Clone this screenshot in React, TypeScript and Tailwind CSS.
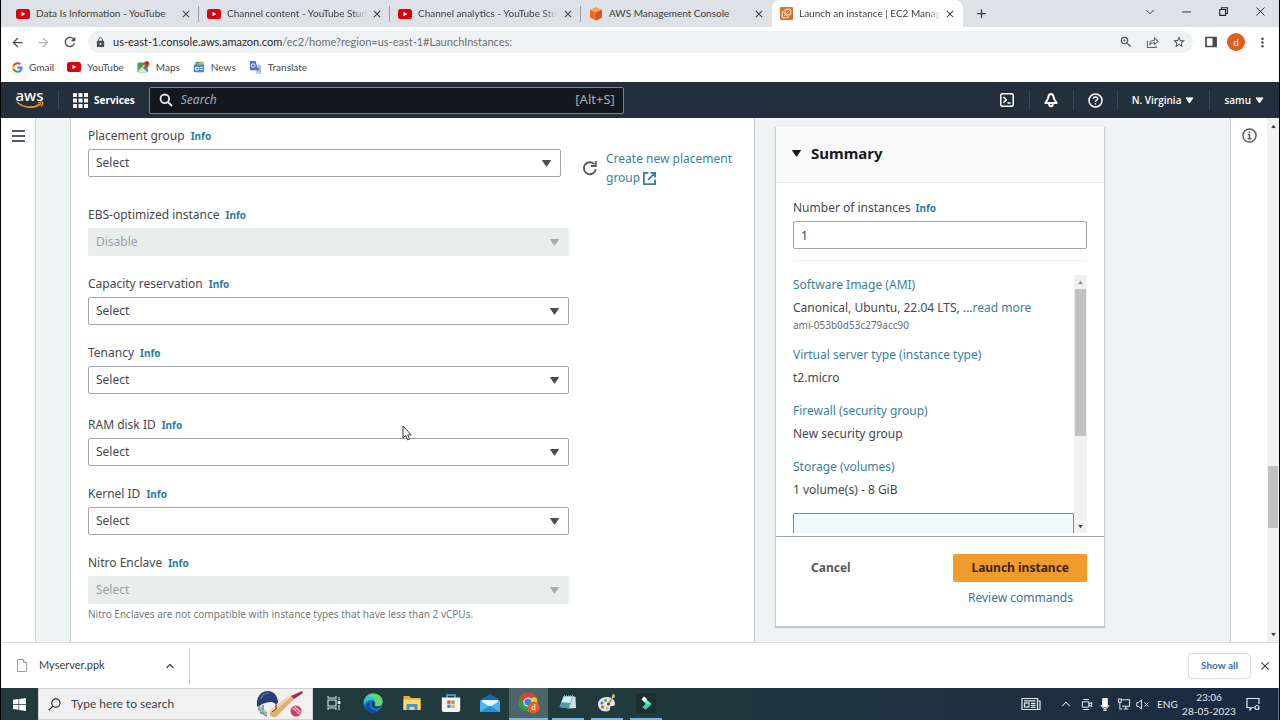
import React, { useState } from 'react';
import { clsx } from 'clsx';
import {
  MdArrowBack,
  MdArrowForward,
  MdRefresh,
  MdLock,
  MdMoreVert,
  MdStarBorder,
  MdZoomIn,
  MdClose,
  MdAdd,
} from 'react-icons/md';
import { ChevronDown, ChevronUp } from 'lucide-react';

const UI_FONT = "font-['Lato','Open_Sans',sans-serif]";
const AWS_FONT = "font-['Noto_Sans','Open_Sans',sans-serif]";

/* ---------- small icons ---------- */

const YouTubeIcon = () => (
  <svg viewBox="0 0 14 10" className="h-[10px] w-[14px] shrink-0">
    <rect width="14" height="10" rx="2.5" fill="#d8040c" />
    <path d="M5.5 2.8 9.3 5 5.5 7.2z" fill="#fff" />
  </svg>
);

const CubeIcon = () => (
  <svg viewBox="0 0 14 14" className="size-[14px] shrink-0">
    <path d="M7 .6 13 3v7.6L7 13.6 1 10.6V3z" fill="#ee6b1c" />
    <path d="M7 .6 13 3 7 5.4 1 3z" fill="#f9a25b" />
    <path d="M7 5.4 13 3v7.6l-6 3z" fill="#d9541e" />
  </svg>
);

const Ec2Icon = () => (
  <svg viewBox="0 0 14 14" className="size-[13px] shrink-0">
    <rect width="14" height="14" rx="1" fill="#d9732b" />
    <g fill="none" stroke="#fff" strokeWidth="1">
      <rect x="5.5" y="2.5" width="6" height="6" rx="1" />
      <path d="M4 5H3a.5.5 0 0 0-.5.5V11a.5.5 0 0 0 .5.5h5.500a.5.5 0 0 0 .5-.5v-1M7 7l3-3M4.500 9.500l2-2" />
    </g>
  </svg>
);

const GoogleIcon = () => (
  <svg viewBox="0 0 24 24" className="size-[11px]">
    <path fill="#4285F4" d="M23 12.300c0-.8-.1-1.600-.2-2.300H12v4.500h6.200a5.300 5.300 0 0 1-2.300 3.400v2.900h3.700c2.200-2 3.400-5 3.400-8.500z" />
    <path fill="#34A853" d="M12 23.500c3.100 0 5.700-1 7.600-2.800l-3.700-2.900c-1 .7-2.300 1.100-3.900 1.100-3 0-5.500-2-6.400-4.700H1.800v3A11.500 11.500 0 0 0 12 23.500z" />
    <path fill="#FBBC05" d="M5.600 14.200a6.900 6.900 0 0 1 0-4.400v-3H1.800a11.500 11.500 0 0 0 0 10.400z" />
    <path fill="#EA4335" d="M12 5.100c1.700 0 3.200.6 4.400 1.700l3.300-3.300A11.500 11.500 0 0 0 1.800 6.800l3.800 3C6.500 7.100 9 5.100 12 5.100z" />
  </svg>
);

const MapsIcon = () => (
  <svg viewBox="0 0 14 14" className="size-[13px]">
    <rect x=".5" y="1.500" width="11" height="11" rx="1.500" fill="#34a25b" />
    <path d="M1 12.500 6.500 7l5 5.500z" fill="#dfe6ea" />
    <path d="M1 11.500 10 2.500" stroke="#f6d15b" strokeWidth="1.500" />
    <path d="M7 7.500 11.500 12V9L8.500 6z" fill="#4a86e8" />
    <path d="M10.500 0A2.800 2.800 0 0 0 7.700 2.800c0 2 2.800 5 2.800 5s2.800-3 2.800-5A2.800 2.800 0 0 0 10.500 0z" fill="#d93a2f" />
    <circle cx="10.500" cy="2.800" r="1" fill="#7d1710" />
  </svg>
);

const NewsIcon = () => (
  <svg viewBox="0 0 14 14" className="size-[12px]">
    <path d="M3 1h8v5H3z" fill="#3fa35c" />
    <path d="M5 2.500 12.500 1l1 5H5z" fill="#e8b52e" />
    <rect x="1" y="4" width="12" height="9" rx="1" fill="#4a86d8" />
    <path d="M3 7.500h3.500v3H3zM8 7.500h3.500M8 10h3.500" stroke="#fff" fill="none" />
  </svg>
);

const TranslateIcon = () => (
  <svg viewBox="0 0 14 14" className="size-[13px]">
    <path d="M6 4h7v10H8z" fill="#c5cbd3" />
    <path d="M9 8h3.500M10.800 7v1c-.2 1.500-1 2.500-2 3.200M9.800 9c.5 1 1.300 1.800 2.500 2.200" stroke="#6a7f9e" strokeWidth=".8" fill="none" />
    <path d="M1 0h6l3 10H1z" fill="#3f79d9" />
    <circle cx="4.500" cy="4.800" r="1.900" stroke="#fff" fill="none" />
  </svg>
);

const ShareIcon = () => (
  <svg viewBox="0 0 14 14" className="size-[13px]" fill="none" stroke="#5f6368" strokeWidth="1.100">
    <path d="M1.500 5v7.500h9.500V10.500" />
    <path d="M3.800 9.500C4 6.500 6 4.500 9 4.500V2l4 3.700L9 9.300V7C7 7 5.200 7.700 3.800 9.500z" strokeLinejoin="round" />
  </svg>
);

const Caret = ({ className }: { className?: string }) => (
  <svg viewBox="0 0 9 7" className={clsx('h-[7px] w-[9px] shrink-0', className)}>
    <path d="M.5.500h8L4.500 6.300z" fill="currentColor" stroke="currentColor" strokeLinejoin="round" />
  </svg>
);

/* ---------- browser chrome ---------- */

const TABS = [
  { title: 'Data Is Information - YouTube', icon: <YouTubeIcon /> },
  { title: 'Channel content - YouTube Stud', icon: <YouTubeIcon />, fade: true },
  { title: 'Channel analytics - YouTube Stu', icon: <YouTubeIcon />, fade: true },
  { title: 'AWS Management Console', icon: <CubeIcon /> },
  { title: 'Launch an instance | EC2 Manag', icon: <Ec2Icon />, active: true, fade: true },
];

const TabStrip = () => (
  <div className="flex h-[27px] items-stretch bg-[#dee1e5] pl-[7px] text-[#3c4043]">
    {TABS.map((tab, i) => (
      <div
        key={tab.title}
        className={clsx(
          'flex w-[191px] min-w-0 items-center gap-[6px] px-2',
          tab.active && 'rounded-t-lg bg-white',
        )}
      >
        {tab.icon}
        <div className="min-w-0 flex-1 whitespace-nowrap text-[10px]">
          <span className={clsx(tab.fade && 'mask-r-from-90%')}>{tab.title}</span>
        </div>
        <button aria-label="Close tab" className="shrink-0">
          <MdClose size={12} />
        </button>
        <span className={clsx('-mr-2 h-4 w-px', i < 3 && 'bg-[#9a9da1]')} />
      </div>
    ))}
    <button aria-label="New tab" className="flex w-9 items-center justify-center">
      <MdAdd size={15} />
    </button>
    <div className="ml-auto flex text-[#222]">
      <button aria-label="Search tabs" className="flex w-[37px] items-center justify-center pb-1">
        <ChevronDown size={14} strokeWidth={1.500} />
      </button>
      <button aria-label="Minimize" className="flex w-[37px] items-center justify-center pb-1">
        <svg viewBox="0 0 10 10" className="size-[9px]" stroke="#222"><path d="M0 5.500h10" /></svg>
      </button>
      <button aria-label="Restore" className="flex w-[37px] items-center justify-center pb-1">
        <svg viewBox="0 0 10 10" className="size-[9px]" fill="none" stroke="#222" strokeWidth="1.200">
          <path d="M.8 2.800h6.500v6.500H.8zM2.800 2.800V.8h6.500v6.500H7.500" />
        </svg>
      </button>
      <button aria-label="Close window" className="flex w-[37px] items-center justify-center pb-1">
        <svg viewBox="0 0 10 10" className="size-[9px]" stroke="#222"><path d="M.5.5l9 9M9.500.5l-9 9" /></svg>
      </button>
    </div>
  </div>
);

const Toolbar = () => (
  <div className="flex h-[30px] items-center px-[9px] text-[#4a4d51]">
    <button aria-label="Back" className="flex w-[26px]"><MdArrowBack size={15} /></button>
    <button aria-label="Forward" className="flex w-[26px] text-[#b4b6b9]"><MdArrowForward size={15} /></button>
    <button aria-label="Reload" className="flex w-[26px]"><MdRefresh size={16} /></button>
    <div className="flex h-[22px] min-w-0 flex-1 items-center gap-[7px] rounded-full bg-[#eff2f3] px-[7px]">
      <MdLock size={11} className="shrink-0" />
      <div className="min-w-0 flex-1 truncate text-[11px] text-[#6b6f73]">
        <span className="text-[#26282b]">us-east-1.console.aws.amazon.com</span>
        /ec2/home?region=us-east-1#LaunchInstances:
      </div>
      <div className="flex items-center gap-[13px]">
        <button aria-label="Zoom"><MdZoomIn size={14} /></button>
        <button aria-label="Share"><ShareIcon /></button>
        <button aria-label="Bookmark"><MdStarBorder size={14} /></button>
      </div>
    </div>
    <div className="ml-3 flex items-center gap-[10px]">
      <button aria-label="Side panel">
        <svg viewBox="0 0 12 12" className="size-[12px]">
          <path d="M1 1.500h10v9H1z" fill="none" stroke="#45484c" strokeWidth="1.600" />
          <path d="M7.500 1h4v10h-4z" fill="#45484c" />
        </svg>
      </button>
      <span className="flex size-[18px] items-center justify-center rounded-full bg-[#dd5f1c] text-[10px] leading-none text-white">d</span>
      <button aria-label="Menu"><MdMoreVert size={15} /></button>
    </div>
  </div>
);

const BOOKMARKS = [
  { label: 'Gmail', icon: <GoogleIcon /> },
  { label: 'YouTube', icon: <YouTubeIcon /> },
  { label: 'Maps', icon: <MapsIcon /> },
  { label: 'News', icon: <NewsIcon /> },
  { label: 'Translate', icon: <TranslateIcon /> },
];

const BookmarksBar = () => (
  <div className="flex h-[25px] items-center gap-[13px] pb-[5px] pl-[11px] text-[10px] text-[#45484c]">
    {BOOKMARKS.map((b) => (
      <a key={b.label} href="#" className="flex items-center gap-[6px]">
        {b.icon}
        {b.label}
      </a>
    ))}
  </div>
);

/* ---------- AWS top navigation ---------- */

const NavDivider = () => <span className="h-5 w-px bg-[#3b4754]" />;

const AwsNav = () => (
  <header className={clsx('flex h-9 items-center bg-[#232f3b] text-white', AWS_FONT)}>
    <a href="#" aria-label="AWS home" className="flex w-[57px] flex-col items-center pb-px">
      <span className="text-[15px] leading-[11px] font-medium">aws</span>
      <svg viewBox="0 0 28 8" className="h-[8px] w-[28px]" fill="none" stroke="#ec912d" strokeWidth="1.700" strokeLinecap="round">
        <path d="M1.500 1.500C8 7.500 18 7.500 24.500 3" />
        <path d="M22.500 1.500c2-.6 3.500-.6 4 0s0 2-1 3.500" strokeWidth="1.300" />
      </svg>
    </a>
    <NavDivider />
    <button className="flex items-center gap-[6px] pl-[14px] text-[10px] font-bold">
      <svg viewBox="0 0 15 15" className="size-[15px]" fill="#fff">
        {[0, 5.5, 11].map((y) => [0, 5.5, 11].map((x) => <rect key={`${x}-${y}`} x={x} y={y} width="4" height="4" />))}
      </svg>
      Services
    </button>
    <label className="ml-[14px] flex h-[27px] w-full max-w-[475px] items-center gap-2 rounded-[2px] border border-[#76838f] bg-[#12181e] pl-[9px] pr-2 text-[12px]">
      <svg viewBox="0 0 14 14" className="size-[14px] shrink-0" fill="none" stroke="#e8eaec" strokeWidth="1.800">
        <circle cx="5.800" cy="5.800" r="4.300" />
        <path d="m9 9 4 4" />
      </svg>
      <input
        type="text"
        aria-label="Search"
        placeholder="Search"
        className="min-w-0 flex-1 bg-transparent italic outline-none placeholder:text-[#a4abb2]"
      />
      <span className="text-[13px] text-[#a4abb2]">[Alt+S]</span>
    </label>
    <div className="ml-auto flex items-center">
      <button aria-label="CloudShell" className="flex w-[43px] justify-center">
        <svg viewBox="0 0 14 14" className="size-[14px]" fill="none" stroke="#fff" strokeWidth="1.500">
          <rect x=".8" y=".8" width="12.400" height="12.400" rx="1.500" />
          <path d="M3.500 4 6.300 6.800 3.500 9.600M7.500 10h3" />
        </svg>
      </button>
      <NavDivider />
      <button aria-label="Notifications" className="flex w-[43px] justify-center">
        <svg viewBox="0 0 14 16" className="h-[16px] w-[14px]" fill="none" stroke="#fff" strokeWidth="1.900" strokeLinejoin="round">
          <path d="M7 2C5.200 2 4.500 3.500 4.300 5.500 4 7.500 3 8.800 1.300 11h11.400C11 8.800 10 7.500 9.700 5.500 9.500 3.500 8.800 2 7 2z" />
          <path d="M5.200 11v1.500a1.800 1.800 0 0 0 3.600 0V11" />
        </svg>
      </button>
      <NavDivider />
      <button aria-label="Support" className="flex w-[43px] justify-center">
        <svg viewBox="0 0 15 15" className="size-[15px]" fill="none" stroke="#fff" strokeWidth="1.500">
          <circle cx="7.500" cy="7.500" r="6.500" />
          <path d="M5.300 5.800c.1-1.200 1-1.900 2.200-1.900s2.200.7 2.200 1.800c0 1.500-2.200 1.500-2.200 3.200M7.500 10.200v1.400" />
        </svg>
      </button>
      <NavDivider />
      <button className="flex items-center gap-1 pl-[14px] pr-[15px] font-['Open_Sans',sans-serif] text-[10px] font-semibold whitespace-nowrap">
        N. Virginia
        <Caret className="scale-90" />
      </button>
      <NavDivider />
      <button className="flex items-center gap-1 pl-[14px] pr-[15px] font-['Open_Sans',sans-serif] text-[10px] font-semibold">
        samu
        <Caret className="scale-90" />
      </button>
    </div>
  </header>
);

/* ---------- form ---------- */

const InfoLink = () => (
  <a href="#" className="text-[10px] font-bold text-[#2a7ca3]">Info</a>
);

interface SelectFieldProps {
  id: string;
  label: string;
  value?: string;
  disabled?: boolean;
  hint?: string;
}

const SelectField = ({ id, label, value = 'Select', disabled, hint }: SelectFieldProps) => (
  <div className="w-full max-w-[481px]">
    <div className="mb-[3px] flex items-center gap-[6px] leading-5">
      <label htmlFor={id}>{label}</label>
      <InfoLink />
    </div>
    <div className="relative">
      <select
        id={id}
        disabled={disabled}
        className={clsx(
          'block h-7 w-full appearance-none rounded-[2px] border px-[7px] opacity-100',
          disabled ? 'border-[#e9edec] bg-[#e9edec] text-[#98a1a3]' : 'border-[#a0a5a9] bg-white text-[#45494d]',
        )}
      >
        <option>{value}</option>
      </select>
      <Caret
        className={clsx(
          'pointer-events-none absolute right-[10px] top-[11px]',
          disabled ? 'text-[#a5adaf]' : 'text-[#4b4f53]',
        )}
      />
    </div>
    {hint && <p className="mt-[2px] text-[10px] leading-4 text-[#73797d]">{hint}</p>}
  </div>
);

const AdvancedDetails = () => (
  <section className="flex min-w-0 flex-1 flex-col gap-[21px] overflow-hidden border-x border-[#c9cfd0] bg-white px-[17px] pt-2">
    <div className="flex flex-col gap-[18px]">
      <div className="flex items-start">
        <div className="min-w-0 flex-1 max-w-[473px]">
          <SelectField id="placement-group" label="Placement group" />
        </div>
        <div className="flex items-center pt-[23px]">
          <button aria-label="Refresh placement groups" className="ml-[21px] mr-2">
            <svg viewBox="0 0 16 16" className="size-4" fill="none" stroke="#545b60" strokeWidth="1.800">
              <path d="M13.800 9A6 6 0 1 1 12.300 4.200" />
              <path d="M13.800 1v5H9" />
            </svg>
          </button>
          <a href="#" className="w-[130px] leading-[19px] text-[#3a7f9f]">
            Create new placement group{' '}
            <svg viewBox="0 0 14 14" className="inline size-[13px]" fill="none" stroke="currentColor" strokeWidth="2">
              <path d="M6 1H1v12h12V8M8 1h5v5M13 1 5.500 8.500" />
            </svg>
          </a>
        </div>
      </div>
      <SelectField id="ebs-optimized" label="EBS-optimized instance" value="Disable" disabled />
      <SelectField id="capacity" label="Capacity reservation" />
      <SelectField id="tenancy" label="Tenancy" />
    </div>
    <div className="flex flex-col gap-[18px]">
      <SelectField id="ram-disk" label="RAM disk ID" />
      <SelectField id="kernel" label="Kernel ID" />
      <SelectField
        id="nitro"
        label="Nitro Enclave"
        disabled
        hint="Nitro Enclaves are not compatible with instance types that have less than 2 vCPUs."
      />
    </div>
  </section>
);

/* ---------- summary panel ---------- */

const SummaryItem = ({ title, children }: { title: string; children: React.ReactNode }) => (
  <div className="leading-5">
    <a href="#" className="text-[#3a7f9f]">{title}</a>
    <div className="mt-[3px]">{children}</div>
  </div>
);

const SummaryPanel = () => {
  const [count, setCount] = useState('1');

  return (
    <aside className="mt-[9px] w-[330px] shrink-0 self-start border border-t-0 border-[#c9cfd0] bg-white shadow-[0_1px_1px_#b8bfc0]">
      <h2 className="flex h-[56px] items-center gap-[10px] border-b border-[#eaeded] bg-[#fafafa] px-4 pb-[2px] text-[15px] font-bold text-[#16191f]">
        <Caret />
        Summary
      </h2>
      <div className="px-[17px] pt-[15px]">
        <div className="mb-[3px] flex items-center gap-[5px] leading-5">
          <label htmlFor="instances">Number of instances</label>
          <InfoLink />
        </div>
        <input
          id="instances"
          type="text"
          value={count}
          onChange={(e) => setCount(e.target.value)}
          className="block h-7 w-full rounded-[2px] border border-[#a0a5a9] px-[7px] outline-none"
        />
        <div className="mt-[11px] flex h-[273px] border-t border-[#eaeded] pt-[14px]">
          <div className="flex min-w-0 flex-1 flex-col gap-[13px] overflow-hidden">
            <SummaryItem title="Software Image (AMI)">
              Canonical, Ubuntu, 22.04 LTS, ...<a href="#" className="text-[#3a7f9f]">read more</a>
              <div className="text-[10px] leading-[14px] text-[#666c70]">ami-053b0d53c279acc90</div>
            </SummaryItem>
            <SummaryItem title="Virtual server type (instance type)">t2.micro</SummaryItem>
            <SummaryItem title="Firewall (security group)">New security group</SummaryItem>
            <SummaryItem title="Storage (volumes)">1 volume(s) - 8 GiB</SummaryItem>
            <div className="h-12 shrink-0 rounded-t-[2px] border border-b-0 border-[#5c93a8] bg-[#f0fafd]" />
          </div>
          <div className="flex w-[13px] flex-col items-center bg-[#f1f1f1]">
            <span className="flex h-[14px] items-center text-[#8b8b8b]">
              <Caret className="rotate-180 scale-50" />
            </span>
            <span className="h-[147px] w-[11px] bg-[#c1c1c1]" />
            <span className="mt-auto flex h-[14px] items-center text-[#404040]">
              <Caret className="scale-50" />
            </span>
          </div>
        </div>
      </div>
      <div className="mt-[3px] border-t border-[#a0a5a9] px-[17px] pb-[18px] pt-[17px]">
        <div className="flex items-center justify-between">
          <button className="h-7 pl-[18px] font-bold text-[#545b64]">Cancel</button>
          <button className="h-7 rounded-[2px] bg-[#f29a2b] px-[18px] font-bold text-[#3b2410]">Launch instance</button>
        </div>
        <div className="mt-[6px] pr-[14px] text-right leading-5">
          <a href="#" className="text-[#3f7396]">Review commands</a>
        </div>
      </div>
    </aside>
  );
};

/* ---------- download shelf ---------- */

const DownloadShelf = () => (
  <div className="flex h-[46px] items-center border-t border-[#d9dcde] bg-white text-[#3c4043]">
    <div className="my-1 flex h-[36px] w-[189px] items-center border-r border-[#cfd2d5] pl-4 pr-[13px]">
      <svg viewBox="0 0 10 13" className="h-[13px] w-[10px]" fill="#fdfdfd" stroke="#8e9296" strokeWidth=".9">
        <path d="M.5.500h6l3 3v9h-9z" />
        <path d="M6.500.5v3h3" />
      </svg>
      <span className="ml-[12px] flex-1 text-[11px]">Myserver.ppk</span>
      <button aria-label="More options"><ChevronUp size={12} strokeWidth={2.500} /></button>
    </div>
    <button className="ml-auto h-[26px] rounded-[4px] border border-[#dadce0] px-[12px] text-[10px] font-bold text-[#3871b0]">Show all</button>
    <button aria-label="Close downloads" className="ml-[7px] mr-[7px]"><MdClose size={14} /></button>
  </div>
);

/* ---------- Windows taskbar ---------- */

const CricketArt = () => (
  <svg viewBox="0 0 50 28" className="h-[28px] w-[50px]">
    <path d="M15 20 36 5l3 4-18 18c-3 1-6-1-6-3z" fill="#e6ae6a" />
    <path d="M15 20 36 5l1 1.500L17 23z" fill="#f5d3a0" />
    <path d="m36 6 11-5 1 2-9 6z" fill="#b3264c" />
    <path d="M2 16C1 7 6 1 13 1c6 0 10 5 10 12l-2 1-4-2c-4 0-9 1-11 3-2 1-4 2-4 1z" fill="#2b3c78" />
    <path d="M6 9c1-4 4-6 8-6" stroke="#5d73b8" strokeWidth="1.500" fill="none" />
    <path d="M21 12v7l-4 3M4 16c0 5 3 8 8 10M3 19h6M5 23h7M8 15v9" stroke="#27325a" strokeWidth="1" fill="none" />
    <path d="M3 17c1 4 4 8 9 8l1-2-6-7z" fill="#a7c59a" opacity=".7" />
    <circle cx="41" cy="21" r="5.500" fill="#d33a66" />
    <path d="m37.500 18 7 6M39.500 16.500l6 5.500" stroke="#f6c4d2" strokeWidth="1.200" />
  </svg>
);

const TaskViewIcon = () => (
  <svg viewBox="0 0 14 14" className="size-[14px]" fill="none" stroke="#e6ebec" strokeWidth="1.100">
    <path d="M1 4h8v6H1zM1 0v2h8V0M1 14v-2h8v2M12 1v3M12 9v5" />
    <rect x="11.300" y="5.500" width="1.500" height="2" fill="#fff" />
  </svg>
);

const EdgeIcon = () => (
  <svg viewBox="0 0 20 20" className="size-5">
    <circle cx="10" cy="10" r="9.500" fill="#1673c9" />
    <path d="M.8 8C2 3 6 .5 10 .5c6 0 9.500 4 9.500 8 0 3-2 5-5 5-2 0-3-.8-2.500-1.500 1-1.500.8-5-3.500-5C5 7 2 9 .8 12z" fill="#35c1d6" />
    <path d="M10 .5c6 0 9.500 4 9.500 8 0 3-2 5-5 5-2 0-3-.8-2.500-1.500.8-1 .8-2.500 0-3.500 0-3-3-6-8-5C5.500 1.500 7.500.5 10 .5z" fill="#5fd870" />
    <path d="M7 11c-.5 4 3 7.500 8 6.500-3 2.500-8 2.500-11 0C2 15 2 10 7.500 8.500 7.200 9.300 7 10 7 11z" fill="#0f4f9e" />
    <path d="M9 9.500c1-1.500 3-1 3 .8 0 .8-.5 1.200-.4 1.900.6 1.600 4 1.800 6.900.1-1 2-3 3.200-5 3.200C10 15.500 8 12 9 9.500z" fill="#223a3d" />
  </svg>
);

const FolderIcon = () => (
  <svg viewBox="0 0 18 16" className="h-[16px] w-[18px]">
    <path d="M.5 1h6l1.500 2h9.500v12H.5z" fill="#e6ac32" />
    <path d="M.5 4.500h17V15H.5z" fill="#fbd968" />
    <path d="M4.500 9h9c.8 0 1 .5 1 1v5h-3v-3h-5v3h-3v-5c0-.5.2-1 1-1z" fill="#4a93cf" />
  </svg>
);

const StoreIcon = () => (
  <svg viewBox="0 0 20 20" className="size-5">
    <path d="M6 5V2h8v3" fill="none" stroke="#4db1e8" strokeWidth="1.500" />
    <path d="M.8 4.500h18.400V17a2 2 0 0 1-2 2H2.800a2 2 0 0 1-2-2z" fill="#f3f6f7" />
    <path d="M6.300 7.500h3.300v3.300H6.300z" fill="#e5502a" />
    <path d="M10.400 7.500h3.300v3.300h-3.300z" fill="#76b02a" />
    <path d="M6.300 11.600h3.300v3.300H6.300z" fill="#2293d8" />
    <path d="M10.400 11.600h3.300v3.300h-3.300z" fill="#efb31f" />
  </svg>
);

const MailIcon = () => (
  <svg viewBox="0 0 20 18" className="h-[18px] w-5">
    <path d="M0 6 10 0l10 6v12H0z" fill="#1668b5" />
    <path d="M1.500 6h17v6h-17z" fill="#e9f3fa" />
    <path d="M0 6.500 10 13l10-6.500V18H0z" fill="#48b4ee" />
    <path d="M0 18 10 12l10 6z" fill="#1f93dc" />
  </svg>
);

const ChromeIcon = () => (
  <svg viewBox="0 0 22 22" className="size-[22px]">
    <circle cx="10" cy="10" r="9.500" fill="#2f9e4f" />
    <path d="M1.800 5.200C3.500 2.500 6.500.5 10 .5c3.500 0 6.600 2 8.200 4.900H10L6 12.500z" fill="#dc3f32" />
    <path d="M18.300 5.400c2 4 1 9-2.800 12.100-1.500 1.200-3.300 2-5.500 2l4-7 0-7z" fill="#f5c52f" />
    <circle cx="10" cy="10" r="4.600" fill="#fff" />
    <circle cx="10" cy="10" r="3.600" fill="#3b7de0" />
    <circle cx="15.500" cy="15.500" r="6" fill="#dd6420" />
    <text x="15.500" y="18.300" textAnchor="middle" fontSize="8" fill="#fff">d</text>
  </svg>
);

const NotepadIcon = () => (
  <svg viewBox="0 0 20 18" className="h-[18px] w-5">
    <path d="M5.500 2H15l-4 12.500L1.500 13z" fill="#8ecbd6" />
    <path d="M6 3h8l-2 6-8.500-1z" fill="#d3edf2" />
    <path d="M3.500 8.500 12 9l-1.500 5.500L1.500 13z" fill="#4f9bab" />
    <path d="m15 2 2.500 1 .5 11-7 .5z" fill="#cfe0e4" />
    <path d="M6 1.500h9" stroke="#8b989d" strokeDasharray="1 1" />
  </svg>
);

const PaintIcon = () => (
  <svg viewBox="0 0 20 20" className="size-5">
    <path d="M10 4c5 0 8 3 8 7 0 2-2 2-3.500 2S13 14.500 13 16s-2 2.500-4 2.500C4 18.500 1 15 1 11s4-7 9-7z" fill="#dfe6e9" />
    <circle cx="5" cy="10" r="1.600" fill="#4c86d8" />
    <circle cx="8.500" cy="7.200" r="1.500" fill="#57b05a" />
    <circle cx="5.500" cy="14" r="1.600" fill="#d8503e" />
    <circle cx="10" cy="15.500" r="1.400" fill="#e8b42f" />
    <circle cx="11.500" cy="11" r="1.500" fill="#35494d" />
    <path d="m12 10 4-6" stroke="#c98a42" strokeWidth="1.800" />
    <path d="M15 4.500c-.5-2 1-3 1.500-4 .8 1 2 2 1 4.500z" fill="#e3bd77" />
  </svg>
);

const FilmoraIcon = () => (
  <svg viewBox="0 0 20 20" className="size-5">
    <rect width="20" height="20" rx="2" fill="#1f2d30" />
    <path d="m9.500 5.500 6 5.500-6 5.500-3-2.500 3.500-3-2.500-2.500z" fill="#6fe8c8" />
    <path d="M10 11h5.500l-6 5.500-3-2.500z" fill="#3fcfab" />
    <path d="m8 3.500 3 2.500-2.500 3L5.500 6.500z" fill="#fff" />
  </svg>
);

const TASKBAR_APPS = [
  { name: 'Task View', icon: <TaskViewIcon /> },
  { name: 'Edge', icon: <EdgeIcon /> },
  { name: 'File Explorer', icon: <FolderIcon /> },
  { name: 'Store', icon: <StoreIcon /> },
  { name: 'Mail', icon: <MailIcon /> },
  { name: 'Chrome', icon: <ChromeIcon />, running: true, focused: true },
  { name: 'Notepad', icon: <NotepadIcon />, running: true },
  { name: 'Paint', icon: <PaintIcon />, running: true },
  { name: 'Filmora', icon: <FilmoraIcon />, running: true },
];

const SystemTray = () => (
  <div className="ml-auto flex items-center text-[#e4e8ec]">
    <svg viewBox="0 0 20 14" className="h-[14px] w-5" fill="none" stroke="currentColor" strokeWidth="1.200">
      <path d="M1 1.500h15.500v11H1zM16.500 4H19v8.500h-3" />
      <rect x="3.500" y="6" width="4.500" height="4" />
      <path d="M3 3.800h11.500M10 6.300h4.500M10 8.300h4.500M10 10.300h4.500" />
    </svg>
    <ChevronUp size={14} strokeWidth={1.800} className="ml-[18px]" />
    <svg viewBox="0 0 12 14" className="ml-[8px] h-[13px] w-[12px]" fill="none" stroke="currentColor" strokeWidth="1.100">
      <rect x="1" y="4" width="7" height="6" rx="1" />
      <path d="M8 6.500 11 5v4L8 7.500M2 1.500h6M2 12.500h6" />
    </svg>
    <svg viewBox="0 0 10 15" className="ml-[7px] h-[14px] w-[10px]">
      <rect x="2" y="1" width="6" height="10" rx="1" fill="#fff" />
      <path d="M.8 8.500c0 5 8.400 5 8.400 0M5 12v2.500M3 14.200h4" fill="none" stroke="#fff" />
    </svg>
    <svg viewBox="0 0 14 13" className="ml-[7px] h-[12px] w-[14px]" fill="none" stroke="currentColor" strokeWidth="1.100">
      <path d="M4.500 2H13v7H5M9 9v2.500M6.500 12h5M1 1h3v3.500H1zM2.500 4.500V12H5" />
    </svg>
    <svg viewBox="0 0 13 11" className="ml-[5px] h-[11px] w-[13px]" fill="none" stroke="currentColor" strokeWidth="1">
      <path d="M.8 3.500h1.700L5.500 1v9L2.500 7.500H.8zM8.500 3.500l4 4M12.500 3.500l-4 4" />
    </svg>
    <span className="ml-[8px] w-[28px] text-[10px]">ENG</span>
    <div className="flex w-[48px] flex-col items-center text-[10px] leading-[14px] whitespace-nowrap">
      <span>23:06</span>
      <span>28-05-2023</span>
    </div>
    <svg viewBox="0 0 14 14" className="ml-[13px] mr-[18px] h-[14px] w-[14px]" fill="none" stroke="currentColor" strokeWidth="1.200">
      <path d="M8 10.500H6l-2 2.500v-2.500H1V1.500h12V7" />
      <circle cx="11" cy="10.500" r="2" />
    </svg>
    <span className="h-8 w-px bg-[#6c7686]" />
  </div>
);

const Taskbar = () => (
  <footer className="flex h-8 items-center bg-linear-to-r from-[#213a3d] from-50% to-[#1b2942]">
    <button aria-label="Start" className="flex w-[37px] justify-center">
      <svg viewBox="0 0 14 14" className="size-[13px]" fill="#fff">
        <path d="M0 2 6 1.200v5.300H0zM6.700 1.100 14 0v6.500H6.700zM0 7.200h6v5.400L0 11.800zM6.700 7.200H14V14l-7.300-1.100z" />
      </svg>
    </button>
    <label className="flex h-8 w-[275px] items-center border border-[#cfd2d3] bg-[#f1f1f1] pl-[9px] pr-[7px]">
      <svg viewBox="0 0 14 14" className="size-[13px] shrink-0" fill="none" stroke="#222" strokeWidth="1.200">
        <circle cx="8.500" cy="5.500" r="4.500" />
        <path d="M5.300 8.700.8 13.200" />
      </svg>
      <input
        type="text"
        aria-label="Type here to search"
        placeholder="Type here to search"
        className="ml-[10px] min-w-0 flex-1 bg-transparent text-[12px] outline-none placeholder:text-[#3f4244]"
      />
      <CricketArt />
    </label>
    <div className="flex pl-px">
      {TASKBAR_APPS.map((app) => (
        <button
          key={app.name}
          aria-label={app.name}
          className={clsx('flex h-8 w-[39px] flex-col items-center', app.focused && 'bg-[#4f6466]')}
        >
          <span className="flex flex-1 items-center">{app.icon}</span>
          <span className={clsx('h-[2px]', app.focused ? 'w-full' : 'w-8', app.running && 'bg-[#7fb6de]')} />
        </button>
      ))}
    </div>
    <SystemTray />
  </footer>
);

const MousePointer = () => (
  <svg viewBox="0 0 10 16" className="pointer-events-none absolute left-[401px] top-[425px] h-4 w-[10px]">
    <path d="M1 1v12l2.800-2.500L5.600 15l2-.9-1.900-4.200h3.500z" fill="#fff" stroke="#222" strokeWidth=".9" />
  </svg>
);

export default function App() {
  return (
    <div className={clsx('relative flex h-screen flex-col overflow-hidden border-x border-black bg-white', UI_FONT)}>
      <TabStrip />
      <Toolbar />
      <BookmarksBar />
      <AwsNav />
      <main className={clsx('flex min-h-0 flex-1 overflow-hidden bg-[#f0f3f3] text-[12px] text-[#45494d]', AWS_FONT)}>
        <nav className="w-[35px] shrink-0 border-r border-[#d0d5d6] bg-white pt-3">
          <button aria-label="Open navigation" className="flex w-full justify-center">
            <svg viewBox="0 0 13 12" className="h-3 w-[13px]" stroke="#545b60" strokeWidth="1.800">
              <path d="M0 1h13M0 6h13M0 11h13" />
            </svg>
          </button>
        </nav>
        <div className="flex min-w-0 flex-1 gap-5 pl-[34px] pr-[125px]">
          <AdvancedDetails />
          <SummaryPanel />
        </div>
        <div className="flex w-[37px] shrink-0 justify-center border-l border-[#c9cfd0] bg-white pt-[10px]">
          <button aria-label="Help panel" className="self-start">
            <svg viewBox="0 0 16 16" className="size-[15px]" fill="none" stroke="#545b60" strokeWidth="1.500">
              <circle cx="8" cy="8" r="7" />
              <path d="M6.200 7H8v4.500M6 11.500h4M7.200 4.500h1.600" />
            </svg>
          </button>
        </div>
        <div className="flex w-3 shrink-0 flex-col items-center bg-[#f1f1f1] text-[#404040]">
          <span className="flex h-4 items-center"><Caret className="rotate-180 scale-50" /></span>
          <span className="mt-[332px] h-[62px] w-[10px] bg-[#c1c1c1]" />
          <span className="mt-auto flex h-4 items-center"><Caret className="scale-50" /></span>
        </div>
      </main>
      <DownloadShelf />
      <Taskbar />
      <MousePointer />
    </div>
  );
}
